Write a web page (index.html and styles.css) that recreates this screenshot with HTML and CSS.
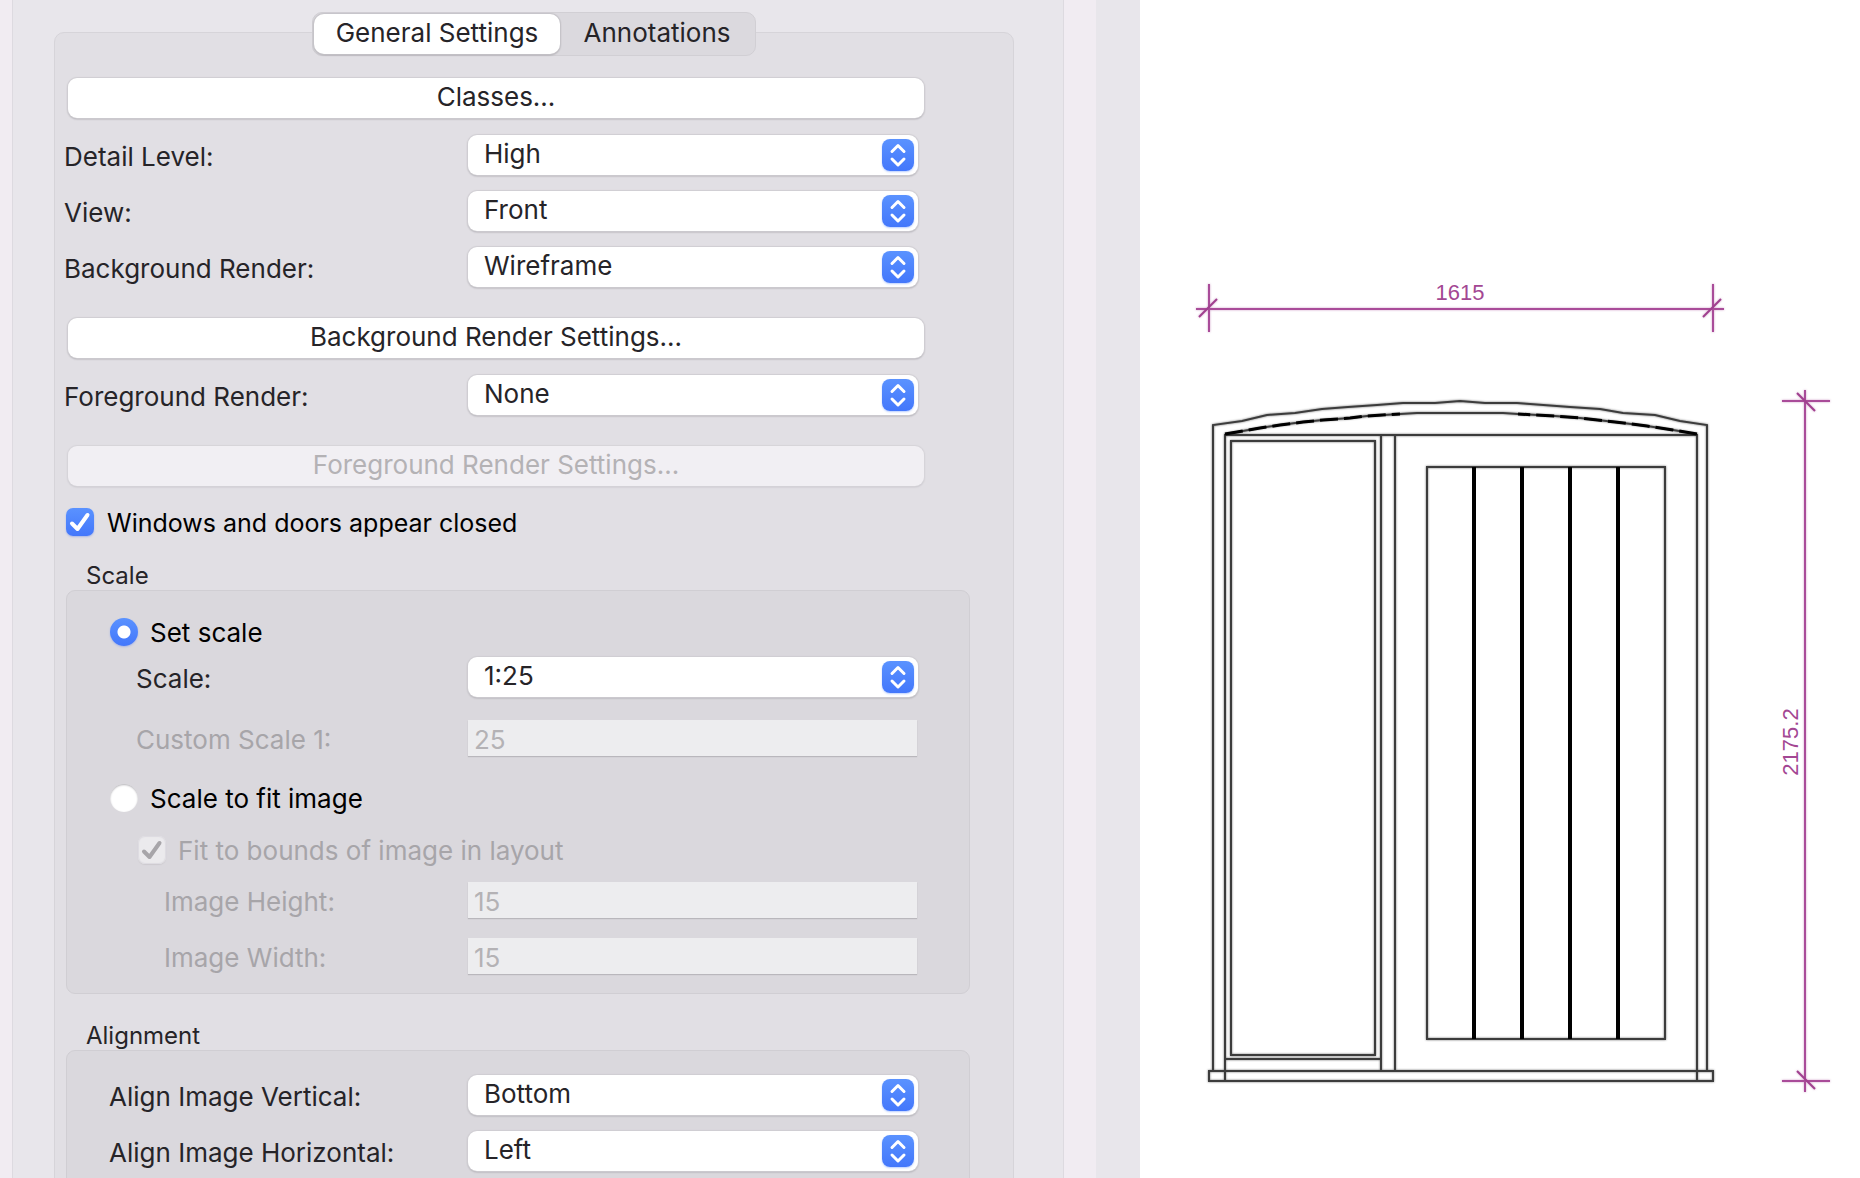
FILE: index.html
```html
<!DOCTYPE html>
<html lang="en">
<head>
<meta charset="utf-8">
<title>Image Settings</title>
<link rel="stylesheet" href="styles.css">
</head>
<body>
<svg class="defs" width="0" height="0" aria-hidden="true">
  <symbol id="chevrons" viewBox="0 0 32 32">
    <path d="M10 12.5 16 6.5 22 12.5M10 20 16 26 22 20" fill="none" stroke="#fff" stroke-width="3" stroke-linecap="round" stroke-linejoin="round"/>
  </symbol>
  <symbol id="tick" viewBox="0 0 28 28">
    <path d="M6 15.5 11.5 21 21.5 7" fill="none" stroke="currentColor" stroke-width="4" stroke-linecap="round" stroke-linejoin="round"/>
  </symbol>
</svg>
<main class="app">
  <section class="dialog">
    <form class="pane">
      <div class="tabs" role="tablist">
        <button class="tab tab-active" type="button" role="tab" aria-selected="true">General Settings</button>
        <button class="tab" type="button" role="tab" aria-selected="false">Annotations</button>
      </div>
      <div class="card">
        <button class="push" type="button">Classes...</button>
        <div class="rows">
          <div class="row">
            <label for="detail">Detail Level:</label>
            <span class="popup"><select id="detail"><option>High</option></select><svg><use href="#chevrons"/></svg></span>
          </div>
          <div class="row">
            <label for="view">View:</label>
            <span class="popup"><select id="view"><option>Front</option></select><svg><use href="#chevrons"/></svg></span>
          </div>
          <div class="row">
            <label for="back">Background Render:</label>
            <span class="popup"><select id="back"><option>Wireframe</option></select><svg><use href="#chevrons"/></svg></span>
          </div>
        </div>
        <button class="push push-spaced" type="button">Background Render Settings...</button>
        <div class="rows">
          <div class="row">
            <label for="fore">Foreground Render:</label>
            <span class="popup"><select id="fore"><option>None</option></select><svg><use href="#chevrons"/></svg></span>
          </div>
        </div>
        <button class="push push-spaced" type="button" disabled>Foreground Render Settings...</button>
        <label class="choice choice-main">
          <span class="box"><input type="checkbox" checked><svg><use href="#tick"/></svg></span>
          <span class="caption">Windows and doors appear closed</span>
        </label>

        <h2 class="heading">Scale</h2>
        <div class="group group-scale">
          <label class="choice"><input type="radio" name="mode" checked><span class="caption">Set scale</span></label>
          <div class="row row-scale">
            <label class="indent" for="scale">Scale:</label>
            <span class="popup"><select id="scale"><option>1:25</option></select><svg><use href="#chevrons"/></svg></span>
          </div>
          <div class="row row-custom">
            <label class="indent off" for="custom">Custom Scale 1:</label>
            <input class="field" id="custom" type="text" value="25" disabled>
          </div>
          <label class="choice"><input type="radio" name="mode"><span class="caption">Scale to fit image</span></label>
          <label class="choice choice-fit off">
            <span class="box"><input type="checkbox" checked disabled><svg><use href="#tick"/></svg></span>
            <span class="caption">Fit to bounds of image in layout</span>
          </label>
          <div class="row row-height">
            <label class="indent-deep off" for="height">Image Height:</label>
            <input class="field" id="height" type="text" value="15" disabled>
          </div>
          <div class="row row-width">
            <label class="indent-deep off" for="width">Image Width:</label>
            <input class="field" id="width" type="text" value="15" disabled>
          </div>
        </div>

        <h2 class="heading">Alignment</h2>
        <div class="group group-align">
          <div class="row">
            <label for="valign">Align Image Vertical:</label>
            <span class="popup"><select id="valign"><option>Bottom</option></select><svg><use href="#chevrons"/></svg></span>
          </div>
          <div class="row">
            <label for="halign">Align Image Horizontal:</label>
            <span class="popup"><select id="halign"><option>Left</option></select><svg><use href="#chevrons"/></svg></span>
          </div>
        </div>
      </div>
    </form>
  </section>
  <section class="preview">
    <svg viewBox="0 0 720 1178" role="img" aria-label="Front elevation with dimensions">
      <g class="frame">
        <path d="M73 1071V425L102 421 127 415 155 413 182 409 208 407 237 405 263 403H295L320 401 345 403H377L430 407 460 409 483 413 515 415 540 421 567 425V1071"/>
        <path d="M85 1081V435H557V1081"/>
        <path d="M69 1071H573V1081H69Z"/>
        <path d="M91 441H235V1055H91Z"/>
        <path d="M85 1059H241M241 435V1071M255 435V1071"/>
        <path d="M287 467H525V1039H287Z"/>
        <path d="M85 434 97 432 120 428 140 425 163 422 183 420 210 418 227 416 260 414 277 413H363L378 414 415 416 440 418 475 422 507 426 533 430 557 434"/>
      </g>
      <path class="arc-heavy" d="M85 434 97 432 120 428 140 425 163 422 183 420 210 418 227 416 260 414"/>
      <path class="arc-heavy" d="M557 434 533 430 507 426 475 422 440 418 415 416 378 414"/>
      <path class="boards" d="M334 467V1039M382 467V1039M430 467V1039M478 467V1039"/>
      <g class="dimension">
        <path d="M56 309H584M69 284V332M573 284V332M665 390V1092M642 401H690M642 1081H690"/>
        <path class="slash" d="M59 317 77 299M563 317 581 299M657 393 675 411M657 1071 675 1089"/>
      </g>
      <text class="measure" x="320" y="300">1615</text>
      <text class="measure" transform="translate(658 742) rotate(-90)">2175.2</text>
    </svg>
  </section>
</main>
</body>
</html>
```

FILE: styles.css
```css
* { box-sizing: border-box; }

body {
  margin: 0;
  color: #262428;
  background: #fff;
  font: 26px/32px Inter, "Liberation Sans", sans-serif;
}

button, input, select { font: inherit; color: inherit; margin: 0; }

.defs { position: absolute; }

.app {
  display: grid;
  grid-template-columns: 19fr 12fr;
  height: 100vh;
  overflow: hidden;
}

/* Dialog panel */
.dialog {
  min-width: 0;
  padding: 0 32px 0 12px;
  background: #f1ecf2;
  border-right: 44px solid #e8e6eb;
}

.pane {
  padding: 12px 49px 0 41px;
  background: #e8e6eb;
  border: solid #dddae0;
  border-width: 0 1px;
}

.tabs {
  position: relative;
  display: flex;
  width: 444px;
  height: 44px;
  margin: 0 auto;
  padding: 1px;
  background: #dbd9de;
  border: 1px solid #d1cfd4;
  border-radius: 10px;
}

.tab {
  flex: 1;
  padding: 0 0 2px;
  background: none;
  border: 0;
  border-radius: 10px;
}

.tab-active {
  flex: 0 0 246px;
  background: #fff;
  box-shadow: 0 0 1px 1px #c6c4c9, 0 1px 2px #8f8d92;
}

.card {
  margin-top: -24px;
  padding: 45px 43px 40px 9px;
  background: #e1dfe4;
  border: 1px solid #d6d4d9;
  border-radius: 10px;
}

.push {
  display: block;
  width: calc(100% - 50px);
  height: 40px;
  margin: 0 46px 17px 4px;
  padding: 0 0 2px;
  background: #fff;
  border: 0;
  border-radius: 9px;
  box-shadow: 0 0 1px 1px #d0ced3, 0 1px 2px #8f8d92;
}

.push-spaced { margin-top: 31px; }

.push:disabled {
  margin-bottom: 0;
  color: #b4b2b5;
  background: #f1eff3;
  box-shadow: 0 0 1px 1px #d6d4d9, 0 1px 2px #bab8bd;
}

.rows {
  display: grid;
  gap: 16px;
  margin-right: 52px;
}

.row {
  display: grid;
  grid-template-columns: 404px 1fr;
  align-items: center;
}

.row label { padding-top: 4px; white-space: nowrap; }

.popup { position: relative; display: block; }

.popup select {
  display: block;
  width: 100%;
  height: 40px;
  padding: 0 44px 2px 16px;
  appearance: none;
  background: #fff;
  border: 0;
  border-radius: 9px;
  box-shadow: 0 0 1px 1px #d0ced3, 0 1px 2px #8f8d92;
}

.popup svg {
  position: absolute;
  top: 4px;
  right: 4px;
  width: 32px;
  height: 32px;
  background: linear-gradient(#5a92ff, #4377fb);
  border-radius: 8px;
  box-shadow: 0 1px 2px #b9ceff;
  pointer-events: none;
}

.choice {
  display: flex;
  align-items: center;
  gap: 12px;
  height: 28px;
  color: #000;
  white-space: nowrap;
}

.caption { padding-top: 2px; }

.choice-main {
  gap: 13px;
  margin: 22px 0 0 2px;
  font-size: 25px;
}

.box { position: relative; width: 28px; height: 28px; color: #fff; }

.box svg {
  position: absolute;
  inset: 0;
  width: 28px;
  height: 28px;
  pointer-events: none;
}

.choice input {
  display: block;
  flex: none;
  width: 28px;
  height: 28px;
  appearance: none;
  background: #fff;
  border-radius: 7px;
  box-shadow: inset 0 1px 2px #b5b3b8;
}

.choice input[type="radio"] { border-radius: 50%; }

.choice input:checked {
  background: linear-gradient(#5a92ff, #4377fb);
  box-shadow: 0 1px 2px #a9b6e6;
}

.choice input[type="radio"]:checked {
  background: radial-gradient(circle, #fff 6px, transparent 7px), linear-gradient(#5a92ff, #4377fb);
}

.choice input:disabled:checked {
  background: #ebeaed;
  box-shadow: inset 0 0 1px 1px #dddbe0, 0 1px 1px #cccacf;
}

.off, .choice.off { color: #a7a5a9; }
.off .box { color: #a7a5a9; }

.heading {
  margin: 26px 0 0 22px;
  font-size: 24px;
  font-weight: 400;
  line-height: 28px;
}

.group {
  margin-left: 2px;
  padding: 27px 51px 19px 42px;
  background: #dad8dd;
  border: 1px solid #d0ced3;
  border-radius: 9px;
}

.group .choice { margin-left: 1px; }
.group .row { grid-template-columns: 359px 1fr; }
.group-scale + .heading { margin-top: 28px; }

.group-align {
  display: grid;
  gap: 16px;
  padding-top: 24px;
}

.indent { padding-left: 27px; }
.choice-fit { padding-left: 28px; }
.indent-deep { padding-left: 55px; }

.row-scale { margin-top: 11px; }
.row-custom { margin: 23px 0 28px; }
.choice-fit { margin-top: 24px; }
.row-height { margin-top: 18px; }
.row-width { margin-top: 20px; }

.field {
  width: calc(100% - 1px);
  height: 36px;
  padding: 2px 6px 0;
  color: #b4b2b5;
  background: #ededef;
  border: 0;
  border-radius: 0;
  box-shadow: 0 1px 1px #b9b7bc;
}

/* Drawing preview */
.preview { min-width: 0; }
.preview svg { display: block; width: 100%; }

.frame, .arc-heavy, .boards, .dimension { fill: none; stroke-width: 2; }
.frame { stroke: #3c3c3c; filter: drop-shadow(0 0 1px #0008); }
.arc-heavy { stroke: #000; stroke-width: 3; stroke-dasharray: 18 6; }
.boards { stroke: #000; stroke-width: 4; }
.dimension { stroke: #a94c99; filter: drop-shadow(0 0 1px #a94c9988); }
.slash { stroke: #a0408f; }

.measure {
  fill: #a34793;
  font: 22px "Liberation Sans", Arial, sans-serif;
  text-anchor: middle;
}
```
